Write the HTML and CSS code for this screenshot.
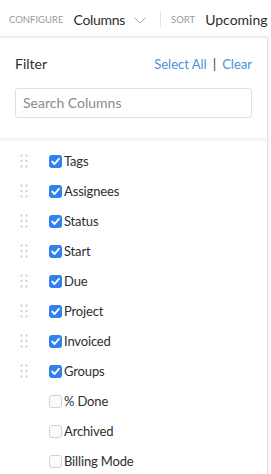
FILE: index.html
```html
<!DOCTYPE html>
<html>
<head>
<meta charset="utf-8">
<link rel="stylesheet" href="styles.css">
</head>
<body>
<div class="topbar">
  <span class="label">CONFIGURE</span>
  <span class="value">Columns</span>
  <svg class="chev" width="12" height="7" viewBox="0 0 12 7"><path d="M0.5 0.8 L6 6 L11.5 0.8" fill="none" stroke="#a8a8a8" stroke-width="1"/></svg>
  <span class="divider"></span>
  <span class="label">SORT</span>
  <span class="value wide">Upcoming</span>
</div>
<div class="panel">
  <div class="panel-head">
    <span class="title">Filter</span>
    <span class="actions"><a class="link">Select All</a><span class="bar">|</span><a class="link">Clear</a></span>
  </div>
  <div class="search">Search Columns</div>
  <div class="sep"></div>
  <ul class="list">
    <li class="row"><span class="handle"><svg width="8" height="14" viewBox="0 0 8 14"><g fill="#bdbdbd"><circle cx="1.5" cy="1.5" r="0.9"/><circle cx="6.5" cy="1.5" r="0.9"/><circle cx="1.5" cy="7" r="0.9"/><circle cx="6.5" cy="7" r="0.9"/><circle cx="1.5" cy="12.5" r="0.9"/><circle cx="6.5" cy="12.5" r="0.9"/></g></svg></span><span class="box on"><svg width="13" height="13" viewBox="0 0 13 13"><path d="M3.2 6.6 L5.6 9 L9.9 3.8" fill="none" stroke="#fff" stroke-width="1.9" stroke-linecap="round" stroke-linejoin="round"/></svg></span><span class="name">Tags</span></li>
    <li class="row"><span class="handle"><svg width="8" height="14" viewBox="0 0 8 14"><g fill="#bdbdbd"><circle cx="1.5" cy="1.5" r="0.9"/><circle cx="6.5" cy="1.5" r="0.9"/><circle cx="1.5" cy="7" r="0.9"/><circle cx="6.5" cy="7" r="0.9"/><circle cx="1.5" cy="12.5" r="0.9"/><circle cx="6.5" cy="12.5" r="0.9"/></g></svg></span><span class="box on"><svg width="13" height="13" viewBox="0 0 13 13"><path d="M3.2 6.6 L5.6 9 L9.9 3.8" fill="none" stroke="#fff" stroke-width="1.9" stroke-linecap="round" stroke-linejoin="round"/></svg></span><span class="name">Assignees</span></li>
    <li class="row"><span class="handle"><svg width="8" height="14" viewBox="0 0 8 14"><g fill="#bdbdbd"><circle cx="1.5" cy="1.5" r="0.9"/><circle cx="6.5" cy="1.5" r="0.9"/><circle cx="1.5" cy="7" r="0.9"/><circle cx="6.5" cy="7" r="0.9"/><circle cx="1.5" cy="12.5" r="0.9"/><circle cx="6.5" cy="12.5" r="0.9"/></g></svg></span><span class="box on"><svg width="13" height="13" viewBox="0 0 13 13"><path d="M3.2 6.6 L5.6 9 L9.9 3.8" fill="none" stroke="#fff" stroke-width="1.9" stroke-linecap="round" stroke-linejoin="round"/></svg></span><span class="name">Status</span></li>
    <li class="row"><span class="handle"><svg width="8" height="14" viewBox="0 0 8 14"><g fill="#bdbdbd"><circle cx="1.5" cy="1.5" r="0.9"/><circle cx="6.5" cy="1.5" r="0.9"/><circle cx="1.5" cy="7" r="0.9"/><circle cx="6.5" cy="7" r="0.9"/><circle cx="1.5" cy="12.5" r="0.9"/><circle cx="6.5" cy="12.5" r="0.9"/></g></svg></span><span class="box on"><svg width="13" height="13" viewBox="0 0 13 13"><path d="M3.2 6.6 L5.6 9 L9.9 3.8" fill="none" stroke="#fff" stroke-width="1.9" stroke-linecap="round" stroke-linejoin="round"/></svg></span><span class="name">Start</span></li>
    <li class="row"><span class="handle"><svg width="8" height="14" viewBox="0 0 8 14"><g fill="#bdbdbd"><circle cx="1.5" cy="1.5" r="0.9"/><circle cx="6.5" cy="1.5" r="0.9"/><circle cx="1.5" cy="7" r="0.9"/><circle cx="6.5" cy="7" r="0.9"/><circle cx="1.5" cy="12.5" r="0.9"/><circle cx="6.5" cy="12.5" r="0.9"/></g></svg></span><span class="box on"><svg width="13" height="13" viewBox="0 0 13 13"><path d="M3.2 6.6 L5.6 9 L9.9 3.8" fill="none" stroke="#fff" stroke-width="1.9" stroke-linecap="round" stroke-linejoin="round"/></svg></span><span class="name">Due</span></li>
    <li class="row"><span class="handle"><svg width="8" height="14" viewBox="0 0 8 14"><g fill="#bdbdbd"><circle cx="1.5" cy="1.5" r="0.9"/><circle cx="6.5" cy="1.5" r="0.9"/><circle cx="1.5" cy="7" r="0.9"/><circle cx="6.5" cy="7" r="0.9"/><circle cx="1.5" cy="12.5" r="0.9"/><circle cx="6.5" cy="12.5" r="0.9"/></g></svg></span><span class="box on"><svg width="13" height="13" viewBox="0 0 13 13"><path d="M3.2 6.6 L5.6 9 L9.9 3.8" fill="none" stroke="#fff" stroke-width="1.9" stroke-linecap="round" stroke-linejoin="round"/></svg></span><span class="name">Project</span></li>
    <li class="row"><span class="handle"><svg width="8" height="14" viewBox="0 0 8 14"><g fill="#bdbdbd"><circle cx="1.5" cy="1.5" r="0.9"/><circle cx="6.5" cy="1.5" r="0.9"/><circle cx="1.5" cy="7" r="0.9"/><circle cx="6.5" cy="7" r="0.9"/><circle cx="1.5" cy="12.5" r="0.9"/><circle cx="6.5" cy="12.5" r="0.9"/></g></svg></span><span class="box on"><svg width="13" height="13" viewBox="0 0 13 13"><path d="M3.2 6.6 L5.6 9 L9.9 3.8" fill="none" stroke="#fff" stroke-width="1.9" stroke-linecap="round" stroke-linejoin="round"/></svg></span><span class="name">Invoiced</span></li>
    <li class="row"><span class="handle"><svg width="8" height="14" viewBox="0 0 8 14"><g fill="#bdbdbd"><circle cx="1.5" cy="1.5" r="0.9"/><circle cx="6.5" cy="1.5" r="0.9"/><circle cx="1.5" cy="7" r="0.9"/><circle cx="6.5" cy="7" r="0.9"/><circle cx="1.5" cy="12.5" r="0.9"/><circle cx="6.5" cy="12.5" r="0.9"/></g></svg></span><span class="box on"><svg width="13" height="13" viewBox="0 0 13 13"><path d="M3.2 6.6 L5.6 9 L9.9 3.8" fill="none" stroke="#fff" stroke-width="1.9" stroke-linecap="round" stroke-linejoin="round"/></svg></span><span class="name">Groups</span></li>
    <li class="row"><span class="handle"></span><span class="box"></span><span class="name">% Done</span></li>
    <li class="row"><span class="handle"></span><span class="box"></span><span class="name">Archived</span></li>
    <li class="row"><span class="handle"></span><span class="box"></span><span class="name">Billing Mode</span></li>
  </ul>
</div>
</body>
</html>
```
FILE: styles.css
```css
* { box-sizing: border-box; }
html, body { margin: 0; padding: 0; background: #fff; }
body {
  font-family: Lato, "Open Sans", "Liberation Sans", sans-serif;
  color: #333;
  width: 271px;
  height: 474px;
  overflow: hidden;
}
.topbar {
  height: 38px;
  display: flex;
  align-items: center;
  padding-left: 9px;
  white-space: nowrap;
  overflow: hidden;
}
.label {
  font-size: 9.5px;
  color: #9b9b9b;
  margin-right: 10px;
}
.value {
  font-size: 14px;
  letter-spacing: -0.3px;
  color: #2e2e2e;
}
.value.wide { letter-spacing: 0; }
.chev { margin-left: 9px; margin-top: 3px; flex: none; }
.divider {
  width: 1px;
  height: 16px;
  background: #e2e2e2;
  margin: 0 10px 0 14px;
  flex: none;
}
.panel {
  width: 268px;
  border-right: 1px solid #e6e6e6;
  box-shadow: 0 -1px 3px rgba(0,0,0,0.14);
  background: #fff;
  height: 436px;
}
.panel-head {
  display: flex;
  justify-content: space-between;
  align-items: center;
  padding: 16px 15px 0 15px;
  height: 36px;
}
.title {
  font-size: 14px;
  line-height: 20px;
  color: #2e2e2e;
}
.actions {
  font-size: 13px;
  line-height: 20px;
  display: flex;
  align-items: center;
}
.link { color: #4a90d9; }
.bar { color: #444; margin: 0 6px; font-size: 14px; }
.search {
  margin: 14px 15px 0 15px;
  height: 30px;
  border: 1px solid #e0e0e0;
  border-radius: 3px;
  padding-left: 7px;
  font-size: 14px;
  line-height: 28px;
  color: #8a8a8a;
}
.sep {
  margin-top: 20px;
  height: 3px;
  margin-right: 1px;
  background: linear-gradient(#f2f2f2, #f8f8f8);
}
.list {
  list-style: none;
  margin: 0;
  padding: 5px 0 0 0;
}
.row {
  height: 30px;
  display: flex;
  align-items: center;
}
.handle {
  width: 8px;
  height: 14px;
  margin-left: 20px;
  margin-right: 21px;
  display: flex;
}
.box {
  width: 13px;
  height: 13px;
  border-radius: 3px;
  border: 1px solid #d2d2d2;
  background: #fbfbfb;
  display: flex;
  flex: none;
}
.box.on {
  border: none;
  background: #2f82ee;
}
.name {
  font-size: 13px;
  letter-spacing: -0.15px;
  color: #2e2e2e;
  margin-left: 2px;
}
```
